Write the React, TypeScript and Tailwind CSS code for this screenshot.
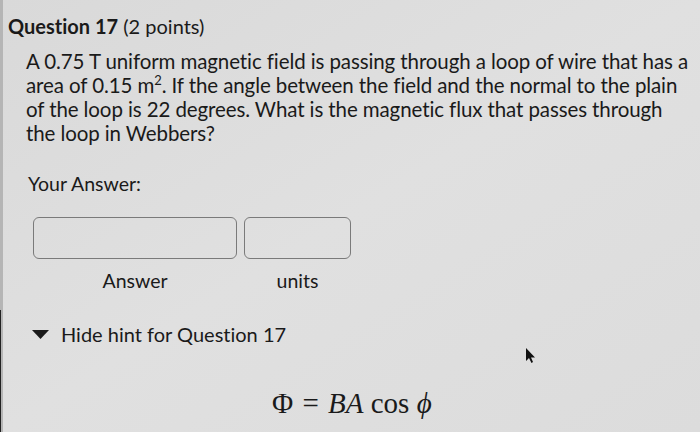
export default function App() {
  return (
    <div className="relative w-[700px] h-[432px] overflow-hidden bg-gradient-to-br from-[#d9d9d9] via-[#e0e0e0] to-[#dcdcdc] text-[#1a1a1a] font-['Lato','Open_Sans',sans-serif] [font-variant-ligatures:none]">
      <div className="absolute left-0 top-0 h-full w-[3px] bg-[#b5b5b5]" />
      <div className="absolute left-0 top-[310px] h-[122px] w-[1px] bg-[#222]" />

      <div className="pl-[8px] pt-[14px]">
        <h1 className="text-[20px] leading-[24px]">
          <span className="font-bold">Question 17</span> (2 points)
        </h1>

        <p className="mt-[11px] ml-[18px] text-[20.5px] leading-[24px] whitespace-nowrap tracking-[-0.1px]">
          A 0.75 T uniform magnetic field is passing through a loop of wire that has a
          <br />
          area of 0.15 m<sup className="text-[13px] relative -top-[8px]">2</sup>. If the angle between the field and the normal to the plain
          <br />
          of the loop is 22 degrees. What is the magnetic flux that passes through
          <br />
          the loop in Webbers?
        </p>

        <div className="mt-[27px] ml-[20px] text-[19.5px] leading-[24px]">Your Answer:</div>

        <div className="mt-[21px] ml-[25px] flex gap-[7px]">
          <div className="flex flex-col items-center">
            <div className="w-[204px] h-[42px] rounded-[6px] border-[1.5px] border-[#7a7a7a]" />
            <span className="mt-[10px] text-[19.5px] leading-[24px]">Answer</span>
          </div>
          <div className="flex flex-col items-center">
            <div className="w-[107px] h-[42px] rounded-[6px] border-[1.5px] border-[#7a7a7a]" />
            <span className="mt-[10px] text-[19.5px] leading-[24px]">units</span>
          </div>
        </div>

        <div className="mt-[29px] ml-[24px] flex items-center gap-[12px]">
          <svg width="17" height="9" viewBox="0 0 17 9">
            <polygon points="0,0 17,0 8.5,9" fill="#1a1a1a" />
          </svg>
          <span className="text-[20px] leading-[24px]">Hide hint for Question 17</span>
        </div>

        <div className="mt-[41px] ml-[264px] font-['Liberation_Serif','Times_New_Roman',serif] text-[29px] leading-[32px] whitespace-nowrap">
          Φ <span className="mx-[2px]">=</span> <i>BA</i> cos <i>ϕ</i>
        </div>
      </div>

      <svg className="absolute left-[526px] top-[348px]" width="11" height="16" viewBox="0 0 11 16">
        <polygon points="0,0 0,13 3,10 5.5,15 7,14 5,9.5 9,9.5" fill="#111" />
      </svg>
    </div>
  );
}
